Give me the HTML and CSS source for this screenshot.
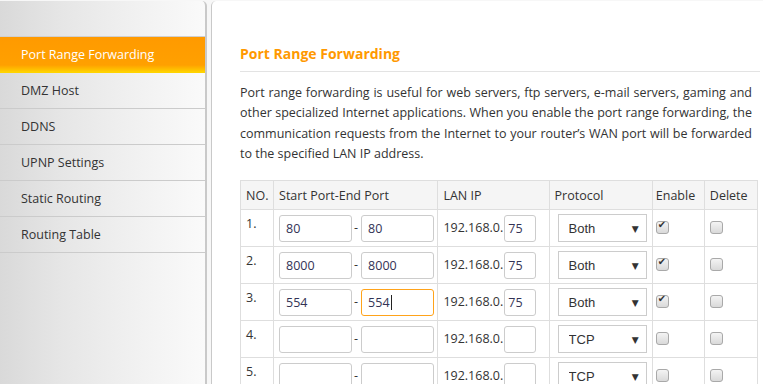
FILE: index.html
```html
<!DOCTYPE html>
<html lang="en">
<head>
  <meta charset="UTF-8" />
  <meta name="viewport" content="width=device-width, initial-scale=1.0"/>
  <title>Port Range Forwarding</title>
  <link rel="stylesheet" href="styles.css">
</head>
<body>
  <div class="sidebar">
    <ul class="menu">
      <li class="active">Port Range Forwarding</li>
      <li>DMZ Host</li>
      <li>DDNS</li>
      <li>UPNP Settings</li>
      <li>Static Routing</li>
      <li>Routing Table</li>
    </ul>
  </div>

  <div class="content">
    <h2>Port Range Forwarding</h2>
    <p class="intro">Port range forwarding is useful for web servers, ftp servers, e-mail servers, gaming and other specialized Internet applications. When you enable the port range forwarding, the communication requests from the Internet to your router’s WAN port will be forwarded to the specified LAN IP address.</p>

    <table class="rules">
      <thead>
        <tr>
          <th class="c-no">NO.</th>
          <th class="c-port">Start Port-End Port</th>
          <th class="c-ip">LAN IP</th>
          <th class="c-proto">Protocol</th>
          <th class="c-en">Enable</th>
          <th class="c-del">Delete</th>
        </tr>
      </thead>
      <tbody>
        <tr>
          <td class="c-no">1.</td>
          <td class="c-port"><input class="port" type="text" value="80">-<input class="port" type="text" value="80"></td>
          <td class="c-ip">192.168.0.<input class="host" type="text" value="75"></td>
          <td class="c-proto"><span class="pick"><select><option>Both</option><option>TCP</option><option>UDP</option></select></span></td>
          <td class="c-en"><input type="checkbox" checked></td>
          <td class="c-del"><input type="checkbox"></td>
        </tr>
        <tr>
          <td class="c-no">2.</td>
          <td class="c-port"><input class="port" type="text" value="8000">-<input class="port" type="text" value="8000"></td>
          <td class="c-ip">192.168.0.<input class="host" type="text" value="75"></td>
          <td class="c-proto"><span class="pick"><select><option>Both</option><option>TCP</option><option>UDP</option></select></span></td>
          <td class="c-en"><input type="checkbox" checked></td>
          <td class="c-del"><input type="checkbox"></td>
        </tr>
        <tr>
          <td class="c-no">3.</td>
          <td class="c-port"><input class="port" type="text" value="554">-<span class="typing"><input class="port focus" type="text" value="554"><span class="caret"></span></span></td>
          <td class="c-ip">192.168.0.<input class="host" type="text" value="75"></td>
          <td class="c-proto"><span class="pick"><select><option>Both</option><option>TCP</option><option>UDP</option></select></span></td>
          <td class="c-en"><input type="checkbox" checked></td>
          <td class="c-del"><input type="checkbox"></td>
        </tr>
        <tr>
          <td class="c-no">4.</td>
          <td class="c-port"><input class="port" type="text" value="">-<input class="port" type="text" value=""></td>
          <td class="c-ip">192.168.0.<input class="host" type="text" value=""></td>
          <td class="c-proto"><span class="pick"><select><option>TCP</option><option>UDP</option><option>Both</option></select></span></td>
          <td class="c-en"><input type="checkbox"></td>
          <td class="c-del"><input type="checkbox"></td>
        </tr>
        <tr>
          <td class="c-no">5.</td>
          <td class="c-port"><input class="port" type="text" value="">-<input class="port" type="text" value=""></td>
          <td class="c-ip">192.168.0.<input class="host" type="text" value=""></td>
          <td class="c-proto"><span class="pick"><select><option>TCP</option><option>UDP</option><option>Both</option></select></span></td>
          <td class="c-en"><input type="checkbox"></td>
          <td class="c-del"><input type="checkbox"></td>
        </tr>
      </tbody>
    </table>
  </div>
</body>
</html>
```

FILE: styles.css
```css
html, body {
  height: 100%;
}

body {
  margin: 0;
  display: flex;
  overflow: hidden;
  font-family: 'Open Sans', 'DejaVu Sans', sans-serif;
  font-size: 12.5px;
  color: #333333;
  background: #f7f7f7;
}

.sidebar {
  width: 205px;
  flex: none;
  padding-top: 35px;
  background: linear-gradient(to right, #d9d9d9, #e6e6e6 30%, #f2f2f2 70%, #fafafa);
  border-right: 2px solid #c9c9c9;
  border-top-right-radius: 5px;
  margin-top: 1px;
}

.menu {
  list-style: none;
  margin: 0;
  padding: 0;
  border-top: 1px solid #cfcfcf;
}

.menu li {
  height: 35px;
  line-height: 35px;
  padding-left: 21px;
  border-bottom: 1px solid #cbcbcb;
  white-space: nowrap;
}

.menu li.active {
  color: #ffffff;
  background: linear-gradient(#ff9a00, #ffa000 80%, #ffc400 95%, #ffd400);
  border-bottom-color: #ffd400;
}

.content {
  flex: 1;
  margin-left: 4px;
  margin-top: 1px;
  padding: 0 3px 0 28px;
  background: #ffffff;
  border-left: 1px solid #c9c9c9;
  border-top-left-radius: 5px;
}

h2 {
  margin: 0;
  padding: 43px 0 8px;
  font-size: 14px;
  line-height: 19px;
  font-weight: bold;
  color: #ff9900;
  border-bottom: 1px solid #e3e3e3;
}

.intro {
  margin: 11px 8px 0 0;
  line-height: 20.3px;
  text-align: justify;
}

.rules {
  margin-top: 16px;
  border-collapse: collapse;
  table-layout: fixed;
  width: 518px;
}

.rules th,
.rules td {
  border: 1px solid #dedede;
  padding: 4px 5px;
  text-align: left;
  white-space: nowrap;
}

.rules th {
  height: 20px;
  font-weight: normal;
  background: #f5f5f5;
}

.rules td {
  height: 27px;
  vertical-align: middle;
}

.rules td.c-no {
  vertical-align: top;
  padding-top: 5px;
}

.c-no { width: 22px; }
.c-port { width: 153px; }
.c-ip { width: 100px; }
.c-proto { width: 92px; }
.c-en { width: 43px; }
.c-del { width: 42px; }

.rules th.c-en,
.rules td.c-en { padding-left: 3px; }

input[type="text"] {
  box-sizing: border-box;
  height: 27px;
  border: 1px solid #cccccc;
  border-radius: 3px;
  padding: 0 6px;
  font-family: 'Open Sans', 'DejaVu Sans', sans-serif;
  font-size: 12.5px;
  color: #333355;
  vertical-align: middle;
  background: #ffffff;
  outline: none;
}

.port {
  width: 73px;
  margin: 0 2px 0 3px;
}

.port:first-child {
  margin-left: 0;
}

.typing .port {
  margin-left: 3px;
}

.port.focus {
  border-color: #ffa31a;
}

.typing {
  position: relative;
  display: inline-block;
  vertical-align: middle;
}

.caret {
  position: absolute;
  left: 33px;
  top: 6px;
  width: 1px;
  height: 15px;
  background: #222222;
}

.host {
  width: 32px;
  padding: 0 3px !important;
  margin-left: 1px;
}

.pick {
  position: relative;
  display: inline-block;
  vertical-align: middle;
  margin-left: 3px;
}

.pick::after {
  content: "▼";
  position: absolute;
  right: 8px;
  top: 8px;
  font-size: 9px;
  color: #333333;
  pointer-events: none;
}

.pick select {
  -webkit-appearance: none;
  appearance: none;
  display: block;
  width: 89px;
  height: 28px;
  padding: 0 10px;
  border: 1px solid #cccccc;
  border-radius: 0;
  background: #ffffff;
  font-family: 'Liberation Sans', Arial, sans-serif;
  font-size: 13px;
  color: #333333;
}

input[type="checkbox"] {
  -webkit-appearance: none;
  appearance: none;
  position: relative;
  width: 13px;
  height: 13px;
  margin: 0 0 3px;
  border: 1px solid #a9a9a9;
  border-radius: 3px;
  background: linear-gradient(#f4f4f4, #d9d9d9);
  vertical-align: middle;
}

input[type="checkbox"]:checked::after {
  content: "✔";
  position: absolute;
  left: 1px;
  top: -3px;
  font-family: 'DejaVu Sans', sans-serif;
  font-size: 10px;
  color: #333333;
}
```
